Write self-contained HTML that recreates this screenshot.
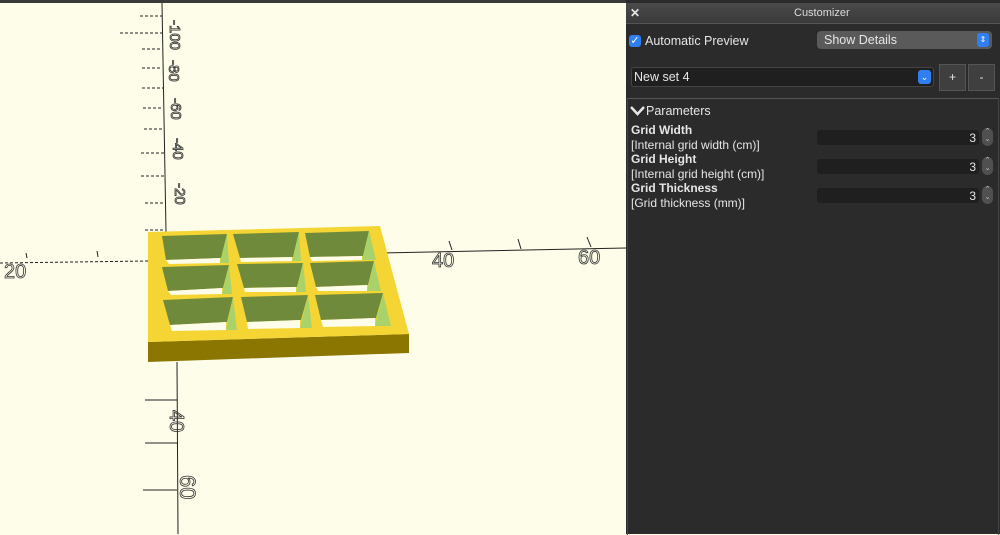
<!DOCTYPE html>
<html><head><meta charset="utf-8"><style>
body{margin:0;width:1000px;height:534px;overflow:hidden;background:#fefde9;font-family:"Liberation Sans",sans-serif;position:relative}
#vp{position:absolute;left:0;top:0;width:626px;height:534px}
#topbar{position:absolute;left:0;top:0;width:1000px;height:3px;background:#3a3a3a}
#panel{position:absolute;left:626px;top:0;width:374px;height:534px;background:#2b2b2b;color:#e6e6e6;font-size:12px}
.t{position:absolute;white-space:nowrap}
.hdr{position:absolute;left:0;top:3px;width:374px;height:20px;background:linear-gradient(#4a4a4a,#3a3a3a);border-bottom:1px solid #555}
.inp{position:absolute;background:#1f1f1f;border-radius:3px}
.spin{position:absolute;width:11px;height:18px;background:#505050;border-radius:6px;color:#ccc;font-size:7px;line-height:8px;text-align:center}
</style></head><body>
<svg id="vp" width="626" height="534" viewBox="0 0 626 534">
<g stroke="#222" fill="none" stroke-width="1">
<line x1="162" y1="3" x2="166" y2="232"/>
<line x1="177" y1="362" x2="178" y2="534"/>
<line x1="380" y1="253" x2="626" y2="248"/>
<line x1="0" y1="263" x2="148" y2="261" stroke-dasharray="3,2"/>
<g stroke-dasharray="3,2">
<line x1="140" y1="16" x2="162" y2="16"/><line x1="120" y1="33" x2="162" y2="33"/>
<line x1="142" y1="49" x2="162" y2="49"/><line x1="142" y1="68" x2="162" y2="68"/>
<line x1="142" y1="88" x2="163" y2="88"/><line x1="143" y1="108" x2="163" y2="108"/>
<line x1="144" y1="129" x2="164" y2="129"/><line x1="141" y1="153" x2="164" y2="153"/>
<line x1="141" y1="176" x2="165" y2="176"/><line x1="145" y1="203" x2="165" y2="203"/>
<line x1="145" y1="230" x2="165" y2="230"/>
</g>
<line x1="26" y1="253" x2="27" y2="258"/><line x1="97" y1="251" x2="98" y2="257"/>
<line x1="449" y1="241" x2="452" y2="250"/><line x1="518" y1="239" x2="521" y2="249"/><line x1="587" y1="237" x2="591" y2="247"/>
<line x1="145" y1="400" x2="177" y2="400"/><line x1="145" y1="443" x2="177" y2="443"/><line x1="143" y1="490" x2="177" y2="490"/>
</g>
<g font-family="Liberation Sans" font-size="18" fill="none" stroke="#333" stroke-width="0.8">
<text x="4" y="278" font-size="20">20</text>
<text x="432" y="267" font-size="20">40</text>
<text x="578" y="264" font-size="20">60</text>
<text transform="translate(170,410) rotate(90)" font-size="20">40</text>
<text transform="translate(180,475) rotate(90)" font-size="22">60</text>
<text transform="translate(170,20) rotate(90)" font-size="15">-100</text>
<text transform="translate(169,60) rotate(90)" font-size="15">-80</text>
<text transform="translate(171,98) rotate(90)" font-size="15">-60</text>
<text transform="translate(173,138) rotate(90)" font-size="15">-40</text>
<text transform="translate(175,183) rotate(90)" font-size="15">-20</text>
</g>
<polygon points="148,342 409,334 409,353 148,362" fill="#8a7600"/>
<polygon points="148,232 380,226 409,334 148,342" fill="#f5d533"/>
<g fill="#6f8a3a">
<polygon points="162,236 227,234 221,258 166,260"/>
<polygon points="233,234 299,232 293,257 240,258"/>
<polygon points="305,233 369,231 363,256 310,257"/>
<polygon points="162,267 229,265 223,288 168,291"/>
<polygon points="237,264 303,263 297,287 244,288"/>
<polygon points="310,263 374,261 368,285 316,287"/>
<polygon points="163,300 233,297 227,322 170,325"/>
<polygon points="241,297 308,295 301,320 247,322"/>
<polygon points="315,295 383,293 376,318 321,320"/>
</g>
<g fill="#a9d36a">
<polygon points="227,234 229,263 220,263"/><polygon points="299,232 301,261 292,261"/><polygon points="369,231 376,260 362,260"/>
<polygon points="229,265 232,294 222,294"/><polygon points="303,263 306,292 296,292"/><polygon points="374,261 381,291 367,291"/>
<polygon points="233,297 237,330 226,330"/><polygon points="308,295 312,328 300,328"/><polygon points="383,293 391,326 375,326"/>
</g>
<g fill="#fefde9">
<polygon points="166,260 220,258 220,263 169,264"/><polygon points="240,258 292,257 292,261 241,262"/><polygon points="310,257 362,256 362,260 312,261"/>
<polygon points="168,291 222,288 222,294 171,295"/><polygon points="244,288 296,287 296,292 245,292"/><polygon points="316,287 367,285 367,291 318,291"/>
<polygon points="170,325 226,322 226,330 172,331"/><polygon points="247,322 300,320 300,328 248,329"/><polygon points="321,320 375,318 375,326 323,327"/>
</g>
</svg>
<div id="topbar"></div>
<div id="panel">
<div class="hdr"><span class="t" style="left:4px;top:3px;font-weight:bold;font-size:12px">✕</span><span class="t" style="left:168px;top:4px;font-size:11px;color:#ddd">Customizer</span></div>
<div style="position:absolute;left:3px;top:35px;width:12px;height:12px;background:#2f7ff0;border-radius:3px;color:#fff;font-size:11px;line-height:12px;text-align:center">✓</div>
<span class="t" style="left:19px;top:34px;font-size:12.5px">Automatic Preview</span>
<div style="position:absolute;left:191px;top:31px;width:175px;height:18px;background:#5a5a5a;border-radius:4px"><span class="t" style="left:7px;top:2px;font-size:12.5px">Show Details</span><div style="position:absolute;right:3px;top:2px;width:12px;height:14px;background:#2f7ff0;border-radius:3px;color:#fff;font-size:8px;text-align:center;line-height:14px">⇕</div></div>
<div class="inp" style="left:5px;top:67px;width:301px;height:18px;border:1px solid #444"><span class="t" style="left:2px;top:2px;font-size:12.5px">New set 4</span><div style="position:absolute;right:2px;top:2px;width:13px;height:14px;background:#2f7ff0;border-radius:3px;color:#fff;font-size:9px;text-align:center;line-height:14px">⌄</div></div>
<div style="position:absolute;left:313px;top:64px;width:25px;height:25px;background:#3f3f3f;border:1px solid #555;text-align:center;line-height:25px">+</div>
<div style="position:absolute;left:342px;top:64px;width:25px;height:25px;background:#3f3f3f;border:1px solid #555;text-align:center;line-height:25px">-</div>
<div style="position:absolute;left:1px;top:98px;width:370px;height:436px;border-top:1px solid #555;border-left:1px solid #444;border-right:1px solid #444"></div>
<svg style="position:absolute;left:4px;top:106px" width="15" height="10"><path d="M1 1 L7.5 8 L14 1" stroke="#e6e6e6" stroke-width="2.5" fill="none"/></svg>
<span class="t" style="left:20px;top:104px;font-size:12.5px">Parameters</span>
<span class="t" style="left:5px;top:123px;font-weight:bold">Grid Width</span>
<span class="t" style="left:5px;top:138px">[Internal grid width (cm)]</span>
<span class="t" style="left:5px;top:152px;font-weight:bold">Grid Height</span>
<span class="t" style="left:5px;top:167px">[Internal grid height (cm)]</span>
<span class="t" style="left:5px;top:181px;font-weight:bold">Grid Thickness</span>
<span class="t" style="left:5px;top:196px">[Grid thickness (mm)]</span>
<div class="inp" style="left:191px;top:130px;width:162px;height:15px"><span class="t" style="right:3px;top:1px">3</span></div>
<div class="inp" style="left:191px;top:159px;width:162px;height:15px"><span class="t" style="right:3px;top:1px">3</span></div>
<div class="inp" style="left:191px;top:188px;width:162px;height:15px"><span class="t" style="right:3px;top:1px">3</span></div>
<div class="spin" style="left:356px;top:128px">⌃<br>⌄</div>
<div class="spin" style="left:356px;top:157px">⌃<br>⌄</div>
<div class="spin" style="left:356px;top:186px">⌃<br>⌄</div>
</div>
</body></html>
